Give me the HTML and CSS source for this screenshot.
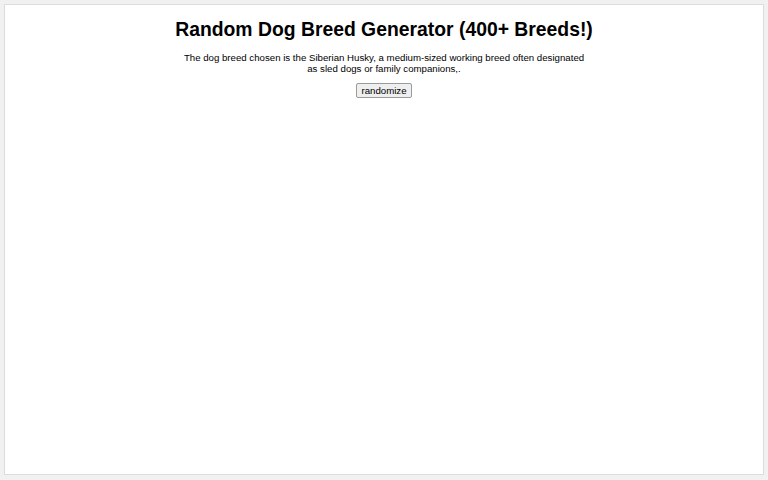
FILE: index.html
```html
<!DOCTYPE html>
<html lang="en">
<head>
<meta charset="utf-8">
<title>Random Dog Breed Generator</title>
<link rel="stylesheet" href="styles.css">
</head>
<body>
<main class="panel">
  <h1 class="title">Random Dog Breed Generator (400+ Breeds!)</h1>
  <p class="description">The dog breed chosen is the Siberian Husky, a medium-sized working breed often designated as sled dogs or family companions,.</p>
  <button class="randomize" type="button">randomize</button>
</main>
</body>
</html>
```
FILE: styles.css
```css
html, body {
  margin: 0;
  height: 100%;
}

body {
  background: #f1f1f1;
  padding: 4px 4px 5px 4px;
  box-sizing: border-box;
  font-family: "Liberation Sans", Arial, sans-serif;
  color: #000;
}

.panel {
  height: 100%;
  box-sizing: border-box;
  background: #fff;
  border: 1px solid #dcdcdc;
  display: flex;
  flex-direction: column;
  align-items: center;
  padding-top: 13px;
}

.title {
  margin: 0;
  font-size: 19.35px;
  font-weight: bold;
  line-height: 22px;
}

.description {
  margin: 12px 0 0 0;
  max-width: 408px;
  font-size: 9.67px;
  line-height: 11px;
  text-align: center;
}

.randomize {
  margin-top: 9px;
  font-family: "Liberation Sans", Arial, sans-serif;
  font-size: 9.67px;
  line-height: 11px;
  padding: 1px 4px;
  background: #efefef;
  border: 1px solid #9a9a9a;
  border-radius: 2px;
  color: #000;
}
```
